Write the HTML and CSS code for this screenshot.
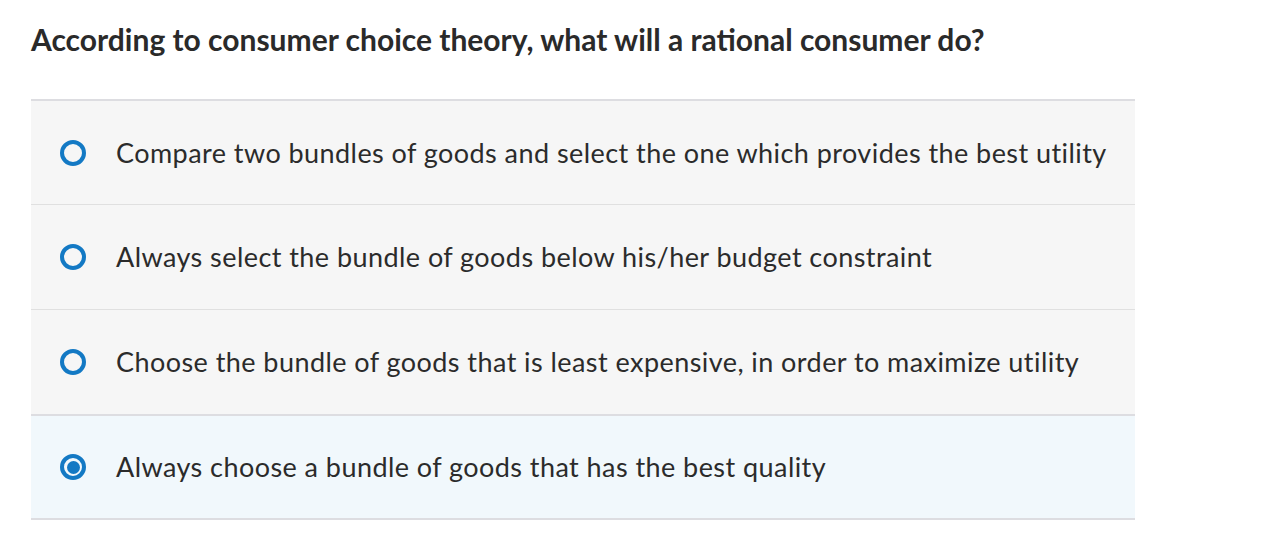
FILE: index.html
```html
<!DOCTYPE html>
<html lang="en">
<head>
<meta charset="utf-8">
<title>Question</title>
<link rel="stylesheet" href="styles.css">
</head>
<body>
<main class="question">
  <h1 class="prompt">According to consumer choice theory, what will a rational consumer do?</h1>
  <ul class="options">
    <li class="option">
      <span class="radio"></span>
      <span class="label">Compare two bundles of goods and select the one which provides the best utility</span>
    </li>
    <li class="option">
      <span class="radio"></span>
      <span class="label">Always select the bundle of goods below his/her budget constraint</span>
    </li>
    <li class="option">
      <span class="radio"></span>
      <span class="label">Choose the bundle of goods that is least expensive, in order to maximize utility</span>
    </li>
    <li class="option option-selected">
      <span class="radio radio-checked"></span>
      <span class="label">Always choose a bundle of goods that has the best quality</span>
    </li>
  </ul>
</main>
</body>
</html>
```
FILE: styles.css
```css
html, body {
  margin: 0;
  padding: 0;
  background: #ffffff;
}
body {
  font-family: "Lato", "Noto Sans", sans-serif;
  color: #2b2b2b;
}
.question {
  padding: 0 0 0 31px;
  width: 1104px;
}
.prompt {
  margin: 0;
  padding-top: 22px;
  height: 99px;
  box-sizing: border-box;
  font-size: 30px;
  font-weight: 700;
  line-height: 34px;
  color: #2a2a2a;
  letter-spacing: 0;
}
.options {
  list-style: none;
  margin: 0;
  padding: 0;
  border-top: 2px solid #dddde1;
  border-bottom: 2px solid #dddde1;
}
.option {
  display: flex;
  align-items: center;
  gap: 30px;
  height: 104px;
  padding-left: 29px;
  background: #f6f6f6;
  border-top: 1px solid #e0e0e0;
}
.option:first-child {
  border-top: 0;
  height: 103px;
}
.option-selected {
  background: #f1f8fc;
  border-top: 2px solid #dddde1;
  height: 102px;
}
.radio {
  width: 26px;
  height: 26px;
  box-sizing: border-box;
  border: 4px solid #1379c4;
  border-radius: 50%;
  flex: none;
  position: relative;
}
.radio-checked::after {
  content: "";
  position: absolute;
  left: 2.5px;
  top: 2.5px;
  width: 13px;
  height: 13px;
  border-radius: 50%;
  background: #1379c4;
}
.label {
  font-size: 27px;
  line-height: 30px;
  color: #2b2b2b;
  letter-spacing: 0.44px;
}
```
